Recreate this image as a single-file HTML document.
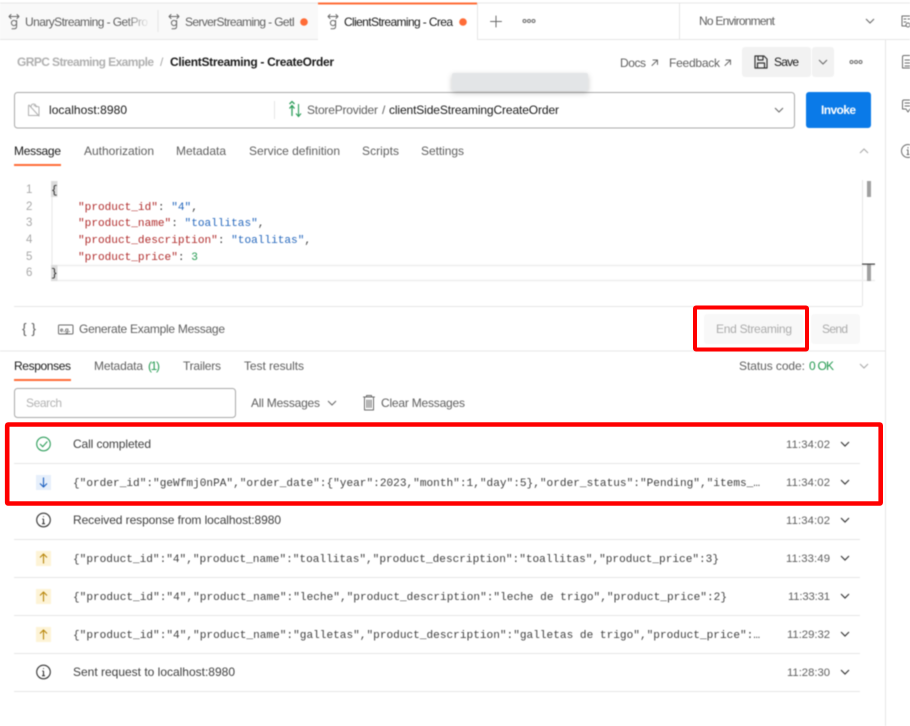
<!DOCTYPE html>
<html><head><meta charset="utf-8"><style>
html,body{margin:0;padding:0;background:#fff;width:910px;height:726px;overflow:hidden}
svg{display:block;position:absolute;left:0;top:0}
#main{filter:blur(.4px)}
text{font-family:"Liberation Sans",sans-serif;font-size:12px;fill:#5f5f5f}
.m{font-family:"Liberation Mono",monospace;font-size:11.1px;fill:#404040}
.row{fill:#404040}
.d{fill:#1a1a1a}.l{fill:#a6a6a6}.b{font-weight:bold}
.n{fill:#a8a8a8;font-size:11.5px}
.r{fill:#b02c2c}.s{fill:#2668bd}.g{fill:#22994f}
.ln{fill:none;stroke:#e6e6e6;stroke-width:1}
.ic{fill:none;stroke:#6b6b6b;stroke-width:1;stroke-linecap:round;stroke-linejoin:round}
.ch{fill:none;stroke:#6b6b6b;stroke-width:1.1}
.chd{fill:none;stroke:#3a3a3a;stroke-width:1.2}
</style></head><body>
<svg id="main" width="910" height="726" viewBox="0 0 910 726" xmlns="http://www.w3.org/2000/svg">
<defs>
<linearGradient id="fade"><stop offset="0" stop-color="#f9f9f9" stop-opacity="0"/><stop offset="1" stop-color="#f9f9f9"/></linearGradient>
<g id="g"><path class="ic" d="M-5 -5.5H5M-3 -7.5L-5 -5.5L-3 -3.5M3 -7.5L5 -5.5L3 -3.5"/><circle class="ic" cx="0" cy="1" r="2.6"/><path class="ic" d="M2.6 -1.5V4.5Q2.6 6.8 0 6.8H-2"/></g>
<path id="cd" class="chd" d="M-4 -2L0 2L4 -2"/>
</defs>
<!-- tab strip -->
<rect x="0" y="3" width="318" height="36" fill="#f9f9f9"/>
<path class="ln" d="M0 3H910M0 39.500H318M477 39.500H910M158 10V32M477.500 3V39M679.500 3V39"/>
<rect x="318" y="2.500" width="159" height="2" fill="#ff6c37"/>
<use href="#g" x="14" y="22"/><use href="#g" x="174" y="22"/><use href="#g" x="333" y="22"/>
<text x="25" y="26" textLength="123">UnaryStreaming - GetPro</text>
<rect x="126" y="12" width="24" height="20" fill="url(#fade)"/>
<text x="185" y="26" textLength="110">ServerStreaming - GetI</text>
<circle cx="304" cy="22" r="3.800" fill="#ff6c37"/>
<text class="d" x="344" y="26" textLength="109">ClientStreaming - Crea</text>
<circle cx="463" cy="22" r="3.800" fill="#ff6c37"/>
<path class="ic" d="M490.500 21.500H501.500M496 16V27" stroke-width="1.1"/>
<g class="ic" stroke-width=".9"><circle cx="524.500" cy="21" r="1.500"/><circle cx="529" cy="21" r="1.500"/><circle cx="533.500" cy="21" r="1.500"/></g>
<text x="699" y="25" textLength="76">No Environment</text>
<path class="ch" d="M866 19L870 23L874 19"/>
<!-- sidebar -->
<path class="ln" d="M885.500 39V726"/>
<g class="ic">
<path d="M913 16H902V26H906M904 19H906M908 19H910M904 22H906"/><circle cx="908" cy="25" r="2"/>
<path d="M914 55.500H904Q902.500 55.500 902.500 57V68H914M905 60H912M905 63H912M905 66H912"/>
<path d="M914 100H904Q902.500 100 902.500 101.500V109H906L908 112L910 109H914M905 103H912M905 106H912"/>
<circle cx="908" cy="151" r="6.500"/><path d="M908 150V154.500M907 150H908M907 154.500H909M908 147.500V148"/>
</g>
<!-- breadcrumb -->
<text x="17" y="66" textLength="137" style="font-weight:bold;fill:#b0b0b0">GRPC Streaming Example</text>
<text class="l" x="160" y="66">/</text>
<text class="d b" x="170" y="66" textLength="164">ClientStreaming - CreateOrder</text>
<text x="620" y="67" textLength="26">Docs</text>
<path class="ic" d="M652 65.500L657.500 60M653 60H657.500V64.500"/>
<text x="669" y="67" textLength="51">Feedback</text>
<path class="ic" d="M725 65.500L730.500 60M726 60H730.500V64.500"/>
<rect x="742" y="47" width="69" height="30" rx="3" fill="#f2f2f2"/>
<rect x="812" y="47" width="22" height="30" rx="3" fill="#f2f2f2"/>
<path d="M755 56H764L767 59V68H755ZM758 56V60H763V56M757.500 68V63H764.500V68" fill="none" stroke="#333" stroke-width="1.200" stroke-linejoin="round"/>
<text class="d" x="774" y="66" textLength="25">Save</text>
<path class="ch" d="M819 60L823 64L827 60"/>
<g class="ic" stroke-width=".9"><circle cx="851.500" cy="62" r="1.500"/><circle cx="856" cy="62" r="1.500"/><circle cx="860.500" cy="62" r="1.500"/></g>
<!-- url box -->
<rect x="14.500" y="92.500" width="780" height="35.500" rx="3" fill="#fff" stroke="#a9a9a9"/>
<rect x="452" y="73" width="136" height="18" rx="2" fill="#e3e5e7" style="filter:drop-shadow(0 2px 3px rgba(0,0,0,.22))"/>
<path class="ic" style="stroke:#b0b0b0" d="M28.500 105.500V115.500H39V107L34 105.500M29 105L39 116M31 107Q31 104 33.500 104Q36 104 36 107"/>
<text class="d" x="49" y="114" textLength="78">localhost:8980</text>
<path class="ln" d="M274.500 101V119"/>
<path d="M292 116V106M289.500 108.500L292 105.500L294.500 108.500M289.500 104L292 101.500L294.500 104" fill="none" stroke="#2e9e5b" stroke-width="1.300"/>
<path d="M298.500 104V116M296 113.500L298.500 116.500L301 113.500" fill="none" stroke="#2e9e5b" stroke-width="1.100"/>
<text x="307" y="114" textLength="71">StoreProvider</text>
<text x="382" y="114">/</text>
<text class="d" x="389" y="114" textLength="170">clientSideStreamingCreateOrder</text>
<path class="ch" d="M775 108L779 112L783 108"/>
<rect x="806" y="92" width="65" height="36" rx="3" fill="#0a7ae8"/>
<text x="821" y="114" textLength="35" class="b" style="fill:#fff">Invoke</text>
<!-- request tabs -->
<text class="d" x="14" y="155" textLength="47">Message</text>
<rect x="14" y="164" width="47" height="2" fill="#ff6c37"/>
<text x="84" y="155" textLength="70">Authorization</text>
<text x="176" y="155" textLength="50">Metadata</text>
<text x="249" y="155" textLength="91">Service definition</text>
<text x="362" y="155" textLength="37">Scripts</text>
<text x="421" y="155" textLength="43">Settings</text>
<path class="ch" style="stroke:#aaa" d="M860 153L864 149L868 153"/>
<!-- editor -->
<path class="ln" d="M862.500 180V306M52 181V281M14 306.500H862"/>
<path d="M51 265.500H875M51 280.500H875" stroke="#eeeeee" stroke-width="1.400"/>
<rect x="51" y="181" width="6.500" height="16" fill="#dcdcdc"/>
<rect x="51" y="265" width="6.500" height="16" fill="#dcdcdc"/>
<text class="n" x="26" y="193">1</text><text class="n" x="26" y="210">2</text><text class="n" x="26" y="226">3</text><text class="n" x="26" y="243">4</text><text class="n" x="26" y="260">5</text><text class="n" x="26" y="276">6</text>
<text class="m" x="51" y="193" style="fill:#222">{</text>
<text class="m" x="78" y="210"><tspan class="r">"product_id"</tspan>: <tspan class="s">"4"</tspan>,</text>
<text class="m" x="78" y="226"><tspan class="r">"product_name"</tspan>: <tspan class="s">"toallitas"</tspan>,</text>
<text class="m" x="78" y="243"><tspan class="r">"product_description"</tspan>: <tspan class="s">"toallitas"</tspan>,</text>
<text class="m" x="78" y="260"><tspan class="r">"product_price"</tspan>: <tspan class="g">3</tspan></text>
<text class="m" x="51" y="276" style="fill:#222">}</text>
<rect x="867" y="181" width="4" height="16" fill="#a0a0a0"/>
<rect x="867" y="264" width="4" height="17" fill="#a0a0a0"/>
<rect x="862" y="263.500" width="13" height="1.200" fill="#444"/>
<!-- action row -->
<text x="22" y="333" style="font-size:14px" textLength="14">{ }</text>
<rect x="58.500" y="325" width="14.500" height="9" rx="1" class="ic"/>
<text x="60" y="332" style="font-size:6px;font-weight:bold">e.g.</text>
<text x="79" y="333" textLength="146">Generate Example Message</text>
<rect x="704" y="314" width="99" height="30" rx="3" fill="#f8f8f8"/>
<rect x="811" y="314" width="49" height="30" rx="3" fill="#f8f8f8"/>
<text x="716" y="333" textLength="76" style="fill:#ababab">End Streaming</text>
<text x="822" y="333" textLength="26" style="fill:#ababab">Send</text>
<path class="ln" d="M0 351H885"/>
<!-- response tabs -->
<text class="d" x="14" y="370" textLength="57">Responses</text>
<rect x="14" y="379" width="57" height="2" fill="#ff6c37"/>
<text x="94" y="370" textLength="49">Metadata</text>
<text class="g" x="148" y="370" textLength="12">(1)</text>
<text x="183" y="370" textLength="38">Trailers</text>
<text x="244" y="370" textLength="60">Test results</text>
<text x="739" y="370" textLength="66">Status code:</text>
<text class="g" x="809" y="370" textLength="25">0 OK</text>
<path class="ch" style="stroke:#aaa" d="M860 364L864 368L868 364"/>
<rect x="14.500" y="388.500" width="221" height="29" rx="3" fill="#fff" stroke="#a9a9a9"/>
<text x="26" y="407" textLength="36" style="fill:#b3b3b3">Search</text>
<text x="251" y="407" textLength="69">All Messages</text>
<path class="ch" d="M328 401L332 405L336 401"/>
<path class="ic" d="M363.500 397H374.500M366.500 397V395.500H371.500V397M364.500 397.500V410H373.500V397.500M367 400V407.500M369 400V407.500M371 400V407.500"/>
<text x="381" y="407" textLength="84">Clear Messages</text>
<!-- rows -->
<path class="ln" d="M14 463.500H860M14 539.500H860M14 577.500H860M14 615.500H860M14 653.500H860M14 691.500H860"/>
<circle cx="43.500" cy="444" r="6.800" fill="none" stroke="#2e9e5b" stroke-width="1.100"/>
<path d="M40 444L42.700 446.700L47.300 441.500" fill="none" stroke="#2e9e5b" stroke-width="1.100"/>
<text class="row" x="73" y="448" textLength="78">Call completed</text>
<rect x="36" y="475" width="15" height="15" fill="#e6effb"/>
<path d="M43.500 477.500V487M40 483.500L43.500 487L47 483.500" fill="none" stroke="#1a5fc0" stroke-width="1.100"/>
<text class="m" x="73" y="486" textLength="687">{"order_id":"geWfmj0nPA","order_date":{"year":2023,"month":1,"day":5},"order_status":"Pending","items_…</text>
<circle cx="43.500" cy="520" r="6.800" fill="none" stroke="#333" stroke-width="1.100"/>
<path d="M43.500 519V523.500M42.300 519H43.500M42 523.700H45M43.500 516.200V517" fill="none" stroke="#333" stroke-width="1.100"/>
<text class="row" x="73" y="524" textLength="208">Received response from localhost:8980</text>
<g id="up"><rect x="36" y="551" width="15" height="15" fill="#fdf3d6"/><path d="M43.500 563.500V554M40 557.500L43.500 554L47 557.500" fill="none" stroke="#b8860b" stroke-width="1.100"/></g>
<use href="#up" y="38"/><use href="#up" y="76"/>
<text class="m" x="73" y="562" textLength="646">{"product_id":"4","product_name":"toallitas","product_description":"toallitas","product_price":3}</text>
<text class="m" x="73" y="600" textLength="654">{"product_id":"4","product_name":"leche","product_description":"leche de trigo","product_price":2}</text>
<text class="m" x="73" y="638" textLength="687">{"product_id":"4","product_name":"galletas","product_description":"galletas de trigo","product_price":…</text>
<circle cx="43.500" cy="672" r="6.800" fill="none" stroke="#333" stroke-width="1.100"/>
<path d="M43.500 671V675.500M42.300 671H43.500M42 675.700H45M43.500 668.200V669" fill="none" stroke="#333" stroke-width="1.100"/>
<text class="row" x="73" y="676" textLength="162">Sent request to localhost:8980</text>
<g style="font-size:11.3px">
<text x="786" y="448" textLength="44" style="font-size:11.3px">11:34:02</text>
<text x="786" y="486" textLength="44" style="font-size:11.3px">11:34:02</text>
<text x="786" y="524" textLength="44" style="font-size:11.3px">11:34:02</text>
<text x="786" y="562" textLength="44" style="font-size:11.3px">11:33:49</text>
<text x="788" y="600" textLength="42" style="font-size:11.3px">11:33:31</text>
<text x="787" y="638" textLength="43" style="font-size:11.3px">11:29:32</text>
<text x="787" y="676" textLength="43" style="font-size:11.3px">11:28:30</text>
</g>
<use href="#cd" x="845" y="444"/><use href="#cd" x="845" y="482"/><use href="#cd" x="845" y="520"/><use href="#cd" x="845" y="558"/><use href="#cd" x="845" y="596"/><use href="#cd" x="845" y="634"/><use href="#cd" x="845" y="672"/>
</svg>
<svg width="910" height="726" viewBox="0 0 910 726" xmlns="http://www.w3.org/2000/svg" style="filter:blur(.25px)">
<rect x="695" y="307.500" width="112" height="42" fill="none" stroke="#ff0000" stroke-width="4" rx="1"/>
<rect x="7.200" y="424.500" width="873.500" height="79" fill="none" stroke="#ff0000" stroke-width="4.600" rx="1"/>
</svg>
</body></html>
